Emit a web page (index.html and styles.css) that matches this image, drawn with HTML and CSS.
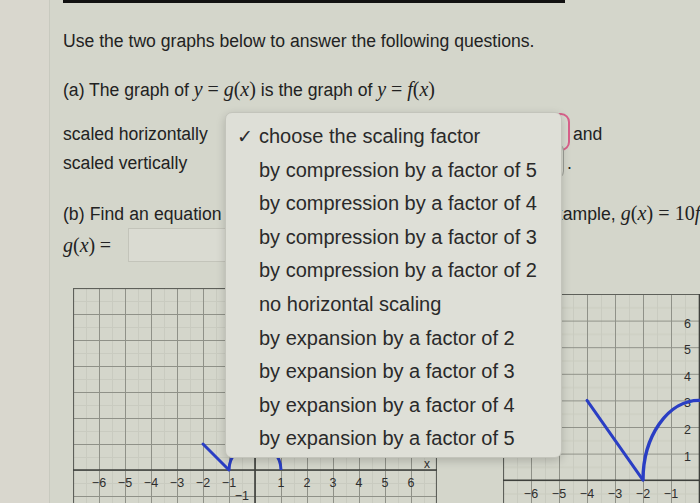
FILE: index.html
```html
<!DOCTYPE html>
<html>
<head>
<meta charset="utf-8">
<link rel="stylesheet" href="styles.css">
</head>
<body>
<div class="page">
  <div class="side"></div>
  <div class="main">
    <div class="topbar"></div>
    <p class="q title">Use the two graphs below to answer the following questions.</p>
    <p class="q parta">(a) The graph of <span class="m">y</span> <span class="op">=</span> <span class="m">g</span><span class="mr">(</span><span class="m">x</span><span class="mr">)</span> is the graph of <span class="m">y</span> <span class="op">=</span> <span class="m">f</span><span class="mr">(</span><span class="m">x</span><span class="mr">)</span></p>
    <div class="row"><span class="lbl">scaled horizontally</span><span class="sel sel-focus"></span><span class="after">and</span></div>
    <div class="row"><span class="lbl">scaled vertically</span><span class="sel sel-2"></span><span class="after">.</span></div>
    <p class="q partb">(b) Find an equation for <span class="m">g</span><span class="mr">(</span><span class="m">x</span><span class="mr">)</span> in terms of the function <span class="m">f</span><span class="mr">(</span><span class="m">x</span><span class="mr">)</span>. For example, <span class="m">g</span><span class="mr">(</span><span class="m">x</span><span class="mr">)</span> <span class="op">=</span> <span class="mr">10</span><span class="m">f</span><span class="mr">(</span><span class="mr">5</span><span class="m">x</span><span class="mr">)</span>.</p>
    <div class="eq"><span class="eqlbl"><span class="m">g</span><span class="mr">(</span><span class="m">x</span><span class="mr">)</span> <span class="op">=</span></span><span class="input"></span></div>
    <div class="graphs">
      <svg class="graph-left" width="364" height="215" viewBox="0 0 364 215">
        <defs>
          <pattern id="gl" width="26" height="26" patternUnits="userSpaceOnUse">
            <path d="M13.5 0 V26 M0 13.5 H26" stroke="#c9cbc0" stroke-width="1" fill="none"/>
            <path d="M0.5 0 V26 M0 0.5 H26" stroke="#8f9188" stroke-width="1" fill="none"/>
          </pattern>
        </defs>
        <rect x="0" y="0" width="364" height="215" fill="url(#gl)"/>
        <rect x="0.5" y="0.5" width="363" height="220" fill="none" stroke="#5e605a" stroke-width="1.2"/>
        <path d="M0 182 H364 M182 0 V215" stroke="#3e403c" stroke-width="1.6"/>
        <g class="lbl-x">
          <text x="26" y="199">−6</text><text x="52" y="199">−5</text><text x="78" y="199">−4</text><text x="104" y="199">−3</text><text x="130" y="199">−2</text><text x="156" y="199">−1</text>
          <text x="208" y="199">1</text><text x="234" y="199">2</text><text x="260" y="199">3</text><text x="286" y="199">4</text><text x="312" y="199">5</text><text x="338" y="199">6</text>
        </g>
        <text class="lbl-y" x="176" y="212">−1</text>
        <text class="axis-name" x="354" y="180">x</text>
        <path d="M130 156 L156 182" stroke="#2a3ec4" stroke-width="3" fill="none" stroke-linecap="round"/>
        <path d="M156 182 A26 26 0 0 1 208 182" stroke="#2a3ec4" stroke-width="3" fill="none"/>
      </svg>
      <svg class="graph-right" width="200" height="209" viewBox="0 0 200 209">
        <defs>
          <pattern id="gr" width="28" height="26.6" patternUnits="userSpaceOnUse">
            <path d="M14.5 0 V26.6 M0 13.8 H28" stroke="#c9cbc0" stroke-width="1" fill="none"/>
            <path d="M0.5 0 V26.6 M0 0.5 H28" stroke="#8f9188" stroke-width="1" fill="none"/>
          </pattern>
        </defs>
        <rect x="0" y="0" width="200" height="209" fill="url(#gr)"/>
        <path d="M0.5 209 V0.5 H200" fill="none" stroke="#5e605a" stroke-width="1.2"/>
        <path d="M0 186.2 H200 M196.5 0 V209" stroke="#3e403c" stroke-width="1.6"/>
        <g class="lbl-x">
          <text x="28" y="204">−6</text><text x="56" y="204">−5</text><text x="84" y="204">−4</text><text x="112" y="204">−3</text><text x="140" y="204">−2</text><text x="168" y="204">−1</text>
        </g>
        <g class="lbl-y">
          <text x="188" y="33.5">6</text><text x="188" y="60">5</text><text x="188" y="86.7">4</text><text x="188" y="113.3">3</text><text x="188" y="139.9">2</text><text x="188" y="166.5">1</text>
        </g>
        <path d="M84 106.4 L140 186.2" stroke="#2a3ec4" stroke-width="3" fill="none" stroke-linecap="round"/>
        <path d="M140 186.2 A56 79.8 0 0 1 252 186.2" stroke="#2a3ec4" stroke-width="3.4" fill="none"/>
      </svg>
    </div>
  </div>
</div>
<div class="dropdown">
  <div class="opt selected"><span class="check">✓</span>choose the scaling factor</div>
  <div class="opt">by compression by a factor of 5</div>
  <div class="opt">by compression by a factor of 4</div>
  <div class="opt">by compression by a factor of 3</div>
  <div class="opt">by compression by a factor of 2</div>
  <div class="opt">no horizontal scaling</div>
  <div class="opt">by expansion by a factor of 2</div>
  <div class="opt">by expansion by a factor of 3</div>
  <div class="opt">by expansion by a factor of 4</div>
  <div class="opt">by expansion by a factor of 5</div>
</div>
</body>
</html>
```
FILE: styles.css
```css
html, body {
  margin: 0;
  padding: 0;
  width: 700px;
  height: 503px;
  overflow: hidden;
}
body {
  background: #d4d6cb;
  font-family: "Liberation Sans", Arial, sans-serif;
  color: #222;
  position: relative;
}
.page {
  display: flex;
  height: 503px;
}
.side {
  width: 49px;
  flex: none;
  background: #d9d7ce;
  border-right: 1px solid #c8c9bf;
}
.main {
  flex: 1;
  padding-left: 13px;
  display: flex;
  flex-direction: column;
  align-items: flex-start;
}
.topbar {
  width: 502px;
  height: 4px;
  background: #111;
}
.q {
  margin: 0;
  font-size: 17.6px;
  line-height: 20px;
  white-space: nowrap;
}
.title { margin-top: 28px; }
.parta { margin-top: 28px; }
.m {
  font-family: "Liberation Serif", "Times New Roman", serif;
  font-style: italic;
  font-size: 20px;
}
.mr, .op {
  font-family: "Liberation Serif", "Times New Roman", serif;
  font-size: 20px;
}
.row {
  display: flex;
  align-items: center;
  height: 29px;
  font-size: 17.6px;
  white-space: nowrap;
}
.parta + .row { margin-top: 20px; }
.lbl { width: 165px; flex: none; }
.sel {
  height: 38px;
  margin: -7px 0 -2px;
  box-sizing: border-box;
  border-radius: 9px;
  background: #d8dad0;
  flex: none;
}
.sel-focus {
  width: 342px;
  border: 2px solid #d8608a;
}
.sel-2 {
  width: 336px;
  border: 1px solid #9c9e96;
}
.after { margin-left: 3px; }
.partb { margin-top: 25px; word-spacing: 0.35px; }
.eq {
  display: flex;
  align-items: center;
  margin-top: 4px;
  height: 34px;
}
.eqlbl { width: 65px; flex: none; }
.input {
  width: 120px;
  height: 34px;
  box-sizing: border-box;
  background: #dadbd2;
  border: 1px solid #c3c4ba;
}
.graphs {
  display: flex;
  align-items: flex-start;
  gap: 66px;
  margin-top: 26px;
  margin-left: 10px;
}
.graph-right { margin-top: 6px; }
svg text {
  font-family: "Liberation Sans", Arial, sans-serif;
  font-size: 12.5px;
  fill: #2e2e2e;
}
.lbl-x text { text-anchor: middle; }
.lbl-y, .lbl-y text { text-anchor: end; }
.axis-name { text-anchor: middle; font-size: 12px; }
.dropdown {
  position: absolute;
  left: 225px;
  top: 112px;
  width: 337px;
  height: 346px;
  box-sizing: border-box;
  padding-top: 7px;
  background: #dedfd7;
  border: 1px solid #c3c4bb;
  border-radius: 7px;
  box-shadow: 0 3px 10px rgba(0, 0, 0, 0.18);
}
.opt {
  position: relative;
  padding-left: 33px;
  font-size: 20px;
  line-height: 33.6px;
  color: #2a2a2a;
  white-space: nowrap;
}
.check {
  position: absolute;
  left: 11px;
  top: 0;
  font-size: 19px;
  font-weight: bold;
  font-family: "DejaVu Sans", sans-serif;
}
```
